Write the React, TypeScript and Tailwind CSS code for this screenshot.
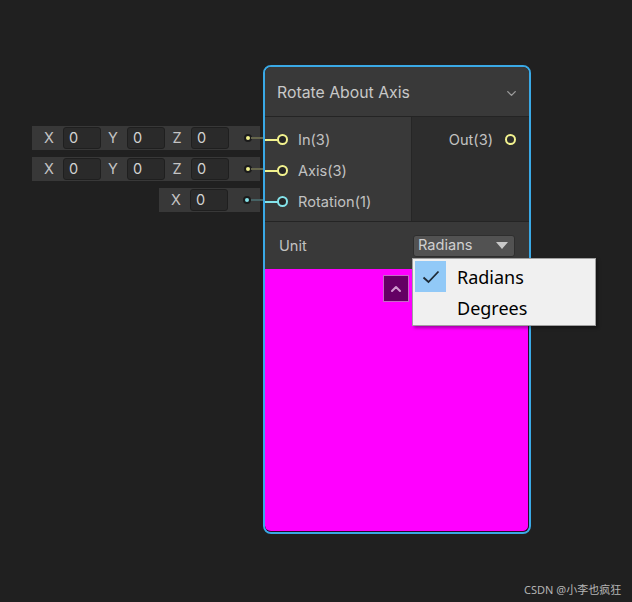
import { ChevronDown, ChevronUp } from 'lucide-react';

const YELLOW = '#f2f28e';
const CYAN = '#84e3ea';

// a field row on the canvas, wired into one of the node's input ports
function VectorField({ axes, left, top, width, color, dim }: { axes: string[]; left: number; top: number; width: number; color: string; dim: string }) {
  return (
    <div
      className="absolute h-[24px] bg-[#383838] flex items-center pl-[11px] text-[14.5px] text-[#c4c4c4]"
      style={{ left, top, width }}
    >
      {axes.map((a, i) => (
        <div key={a} className={`flex items-center ${i === 0 ? '' : 'ml-[6px]'}`}>
          <span className="w-[12px] text-center leading-none">{a}</span>
          <div className="ml-[8px] w-[38px] h-[22px] rounded-[3px] bg-[#2a2a2a] border border-[#1f1f1f] flex items-center pl-[5px] text-[#d2d2d2]">
            0
          </div>
        </div>
      ))}
      <div className="ml-[15px] w-[8px] h-[8px] rounded-full border-2 border-[#1b1b1b]" style={{ background: color }} />
      <div className="absolute right-[-4px] w-[13px] h-[2px]" style={{ background: dim }} />
    </div>
  );
}

function InPort({ label, color }: { label: string; color: string }) {
  return (
    <div className="relative h-[31px] flex items-center pl-[33px]">
      <div className="absolute left-0 w-[13px] h-[2px]" style={{ background: color }} />
      <div
        className="absolute left-[12px] w-[11px] h-[11px] rounded-full border-2 bg-[#252525]"
        style={{ borderColor: color }}
      />
      <span className="pt-[3px]">{label}</span>
    </div>
  );
}

export default function App() {
  return (
    <div
      className="relative w-[632px] h-[602px] bg-[#202020] overflow-hidden"
      style={{ fontFamily: 'Inter, "Noto Sans", sans-serif' }}
    >
      <VectorField axes={['X', 'Y', 'Z']} left={32} top={126} width={228} color={YELLOW} dim="#66664c" />
      <VectorField axes={['X', 'Y', 'Z']} left={32} top={157} width={228} color={YELLOW} dim="#66664c" />
      <VectorField axes={['X']} left={159} top={188} width={101} color={CYAN} dim="#466264" />

      {/* node */}
      <div className="absolute left-[263px] top-[65px] w-[268px] h-[469px] rounded-[8px] border-2 border-[#3aa9e6] bg-[#1c1c1c] overflow-hidden flex flex-col text-[14.6px] text-[#c2c2c2]">
        <div className="h-[50px] shrink-0 bg-[#393939] border-b border-[#242424] flex items-center justify-between pl-[12px] pr-[10px] pt-[3px]">
          <span className="text-[15.8px] text-[#c8c8c8]">Rotate About Axis</span>
          <ChevronDown size={15} color="#9a9a9a" strokeWidth={2.2} />
        </div>

        <div className="h-[105px] shrink-0 flex border-b border-[#242424]">
          <div className="w-[147px] bg-[#393939] border-r border-[#262626] pt-[7px]">
            <InPort label="In(3)" color={YELLOW} />
            <InPort label="Axis(3)" color={YELLOW} />
            <InPort label="Rotation(1)" color={CYAN} />
          </div>
          <div className="flex-1 bg-[#2d2d2d] pt-[7px]">
            <div className="h-[31px] flex items-center justify-end pr-[13px]">
              <span className="pt-[3px]">Out(3)</span>
              <div className="ml-[12px] w-[11px] h-[11px] rounded-full border-2" style={{ borderColor: YELLOW }} />
            </div>
          </div>
        </div>

        <div className="h-[47px] shrink-0 bg-[#393939] flex items-center justify-between px-[14px]">
          <span className="pt-[3px]">Unit</span>
          <div className="w-[102px] h-[22px] rounded-[3px] bg-[#525252] border border-[#2e2e2e] flex items-center justify-between pl-[4px] pr-[6px] text-[#d0d0d0]">
            <span className="pt-[1px]">Radians</span>
            <svg width="12" height="7" viewBox="0 0 12 7">
              <path d="M0 0 H12 L6 7 Z" fill="#c8c8c8" />
            </svg>
          </div>
        </div>

        <div className="relative flex-1 bg-[#ff00ff] rounded-b-[6px] border-b border-r border-[#2a0a2a]">
          <div className="absolute left-[118px] top-[6px] w-[26px] h-[27px] bg-[#640064] border border-[#c768c7] flex items-center justify-center">
            <ChevronUp size={16} color="#d09ad0" strokeWidth={3} />
          </div>
        </div>
      </div>

      {/* open dropdown menu */}
      <div
        className="absolute left-[412px] top-[258px] w-[184px] h-[68px] bg-[#f0f0f0] border border-[#a0a0a0] shadow-[2px_2px_3px_rgba(0,0,0,0.35)] p-[2px] text-[18px] text-black"
        style={{ fontFamily: '"Noto Sans", "Open Sans", sans-serif' }}
      >
        <div className="h-[31px] flex items-center">
          <div className="w-[31px] h-[31px] bg-[#91c9f7] flex items-center justify-center">
            <svg width="18" height="14" viewBox="0 0 18 14">
              <path d="M1.5 7.5 L6.5 12 L16.5 1.5" fill="none" stroke="#1e2a36" strokeWidth="1.8" />
            </svg>
          </div>
          <span className="ml-[11px] leading-none">Radians</span>
        </div>
        <div className="h-[31px] flex items-center">
          <div className="w-[31px]" />
          <span className="ml-[11px] leading-none">Degrees</span>
        </div>
      </div>

      <div
        className="absolute left-[524px] top-[582px] text-[11px] text-[#b4b4b4] whitespace-nowrap"
        style={{ fontFamily: '"Noto Sans", "Noto Sans CJK SC", sans-serif' }}
      >
        CSDN @小李也疯狂
      </div>
    </div>
  );
}
